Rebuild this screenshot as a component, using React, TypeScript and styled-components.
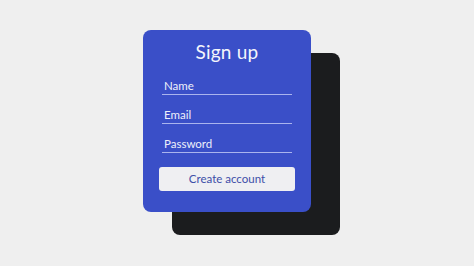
import styled, { createGlobalStyle } from "styled-components";

const GlobalStyle = createGlobalStyle`
  html, body {
    margin: 0;
    padding: 0;
    background: #efefef;
  }
  body {
    font-family: Lato, "Noto Sans", sans-serif;
  }
`;

const Page = styled.div`
  width: 474px;
  height: 266px;
  box-sizing: border-box;
  padding: 30px 0 0 143px;
  background: #efefef;
`;

const Stack = styled.div`
  position: relative;
  width: 168px;
`;

const BackCard = styled.div`
  position: absolute;
  left: 29px;
  top: 23px;
  width: 168px;
  height: 182px;
  border-radius: 8px;
  background: #1b1c1e;
`;

const Card = styled.form`
  position: relative;
  display: flex;
  flex-direction: column;
  box-sizing: border-box;
  width: 168px;
  height: 182px;
  padding: 9px 16px 0;
  border-radius: 8px;
  background: #3a4fc8;
`;

const Title = styled.h1`
  margin: 0;
  font-size: 19px;
  line-height: 26px;
  font-weight: 400;
  letter-spacing: 0.2px;
  color: #f4f5fb;
  text-align: center;
`;

const Fields = styled.div`
  display: flex;
  flex-direction: column;
  gap: 12px;
  margin: 13px 3px 0;
`;

const Field = styled.label`
  display: block;
  height: 16px;
  padding-left: 2px;
  border-bottom: 1px solid #aab4ee;
  font-size: 11.5px;
  line-height: 15px;
  color: #eef0fa;
`;

const Button = styled.button`
  margin-top: 14px;
  height: 24px;
  padding: 0 0 2px;
  border: none;
  border-radius: 3px;
  background: #efeff2;
  color: #3d4ea8;
  font-family: Lato, "Noto Sans", sans-serif;
  font-size: 11.5px;
  cursor: pointer;
`;

export default function App() {
  return (
    <>
      <GlobalStyle />
      <Page>
        <Stack>
          <BackCard />
          <Card onSubmit={(e) => e.preventDefault()}>
            <Title>Sign up</Title>
            <Fields>
              <Field>Name</Field>
              <Field>Email</Field>
              <Field>Password</Field>
            </Fields>
            <Button type="submit">Create account</Button>
          </Card>
        </Stack>
      </Page>
    </>
  );
}
